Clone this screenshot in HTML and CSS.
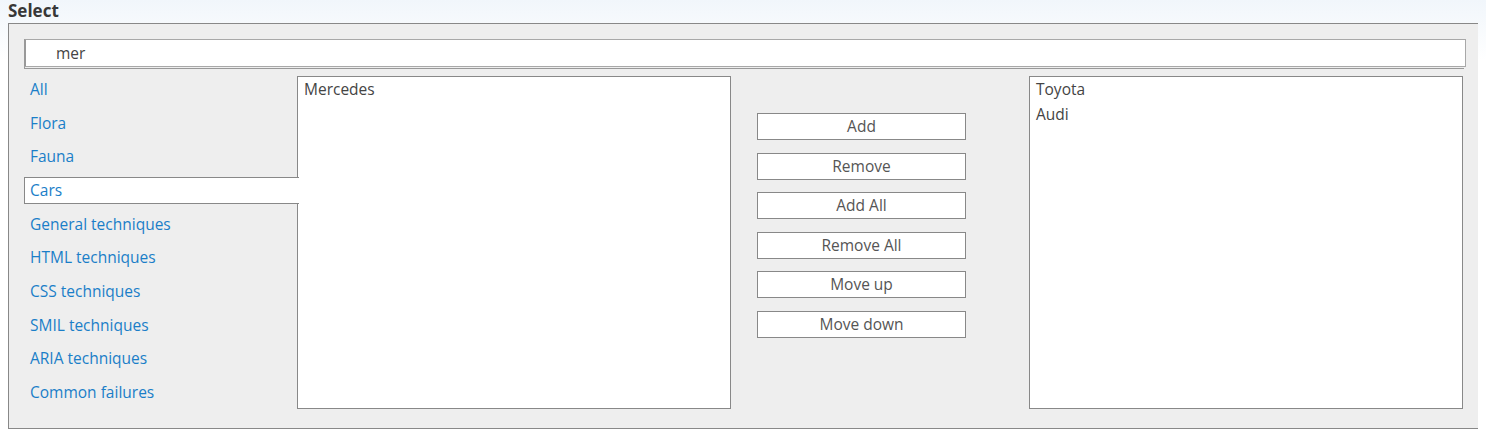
FILE: index.html
```html
<!DOCTYPE html>
<html lang="en">
<head>
<meta charset="utf-8">
<title>Select</title>
<link rel="stylesheet" href="styles.css">
</head>
<body>
<h1 class="title">Select</h1>
<div class="panel">
  <div class="search">
    <input class="search-input" type="text" value="mer">
  </div>
  <div class="main">
    <ul class="nav">
      <li class="nav-item">All</li>
      <li class="nav-item">Flora</li>
      <li class="nav-item">Fauna</li>
      <li class="nav-item is-active">Cars</li>
      <li class="nav-item">General techniques</li>
      <li class="nav-item">HTML techniques</li>
      <li class="nav-item">CSS techniques</li>
      <li class="nav-item">SMIL techniques</li>
      <li class="nav-item">ARIA techniques</li>
      <li class="nav-item">Common failures</li>
    </ul>
    <ul class="listbox">
      <li class="option">Mercedes</li>
    </ul>
    <div class="actions">
      <button class="btn">Add</button>
      <button class="btn">Remove</button>
      <button class="btn">Add All</button>
      <button class="btn">Remove All</button>
      <button class="btn">Move up</button>
      <button class="btn">Move down</button>
    </div>
    <ul class="listbox listbox-right">
      <li class="option">Toyota</li>
      <li class="option">Audi</li>
    </ul>
  </div>
</div>
</body>
</html>
```
FILE: styles.css
```css
html, body {
  height: 100%;
}
body {
  margin: 0 8px;
  background: linear-gradient(#f1f6fb 0, #ffffff 60px) no-repeat;
  background-color: #fff;
  font-family: "Open Sans", "DejaVu Sans", sans-serif;
  font-size: 15.5px;
  color: #444;
}
.title {
  margin: 0;
  height: 23px;
  line-height: 22px;
  font-size: 17px;
  font-weight: bold;
  color: #383838;
}
.panel {
  width: 1471px;
  box-sizing: border-box;
  height: 406px;
  border: 1px solid #888;
  background: #eeeeee;
  padding: 15px 11px 0 15px;
}
.search {
  border-left: 1px solid #999;
  border-bottom: 1px solid #999;
  margin-right: 3px;
  padding-bottom: 1px;
}
.search-input {
  display: block;
  box-sizing: border-box;
  width: calc(100% + 3px);
  height: 28px;
  margin: 0 0 0 -1px;
  border: 1px solid #a8a8a8;
  border-left: 2px solid #999;
  background: #fff;
  padding: 0 0 0 30px;
  font-family: inherit;
  font-size: 15.5px;
  color: #444;
  outline: none;
}
.main {
  display: flex;
  align-items: flex-start;
  margin-top: 7px;
}
.nav {
  list-style: none;
  margin: 0;
  padding: 0;
  width: 273px;
  flex: none;
  position: relative;
  z-index: 1;
}
.nav-item {
  box-sizing: border-box;
  height: 27px;
  line-height: 25px;
  padding: 0 5px;
  margin-bottom: 6.67px;
  border: 1px solid transparent;
  border-right: 0;
  color: #1a7ec8;
  white-space: nowrap;
}
.nav-item.is-active {
  background: #fff;
  border-color: #888;
  margin-right: -2px;
}
.listbox {
  list-style: none;
  margin: 0;
  padding: 0 6px;
  box-sizing: border-box;
  width: 434px;
  height: 333px;
  border: 1px solid #888;
  background: #fff;
  flex: none;
}
.option {
  line-height: 25px;
  color: #444;
}
.actions {
  display: flex;
  flex-direction: column;
  gap: 12.6px;
  margin: 37px 63px 0 26px;
  flex: none;
}
.btn {
  box-sizing: border-box;
  width: 209px;
  height: 27px;
  border: 1px solid #888;
  background: #fff;
  font-family: inherit;
  font-size: 15.5px;
  line-height: 25px;
  color: #555;
  padding: 0;
}
```
